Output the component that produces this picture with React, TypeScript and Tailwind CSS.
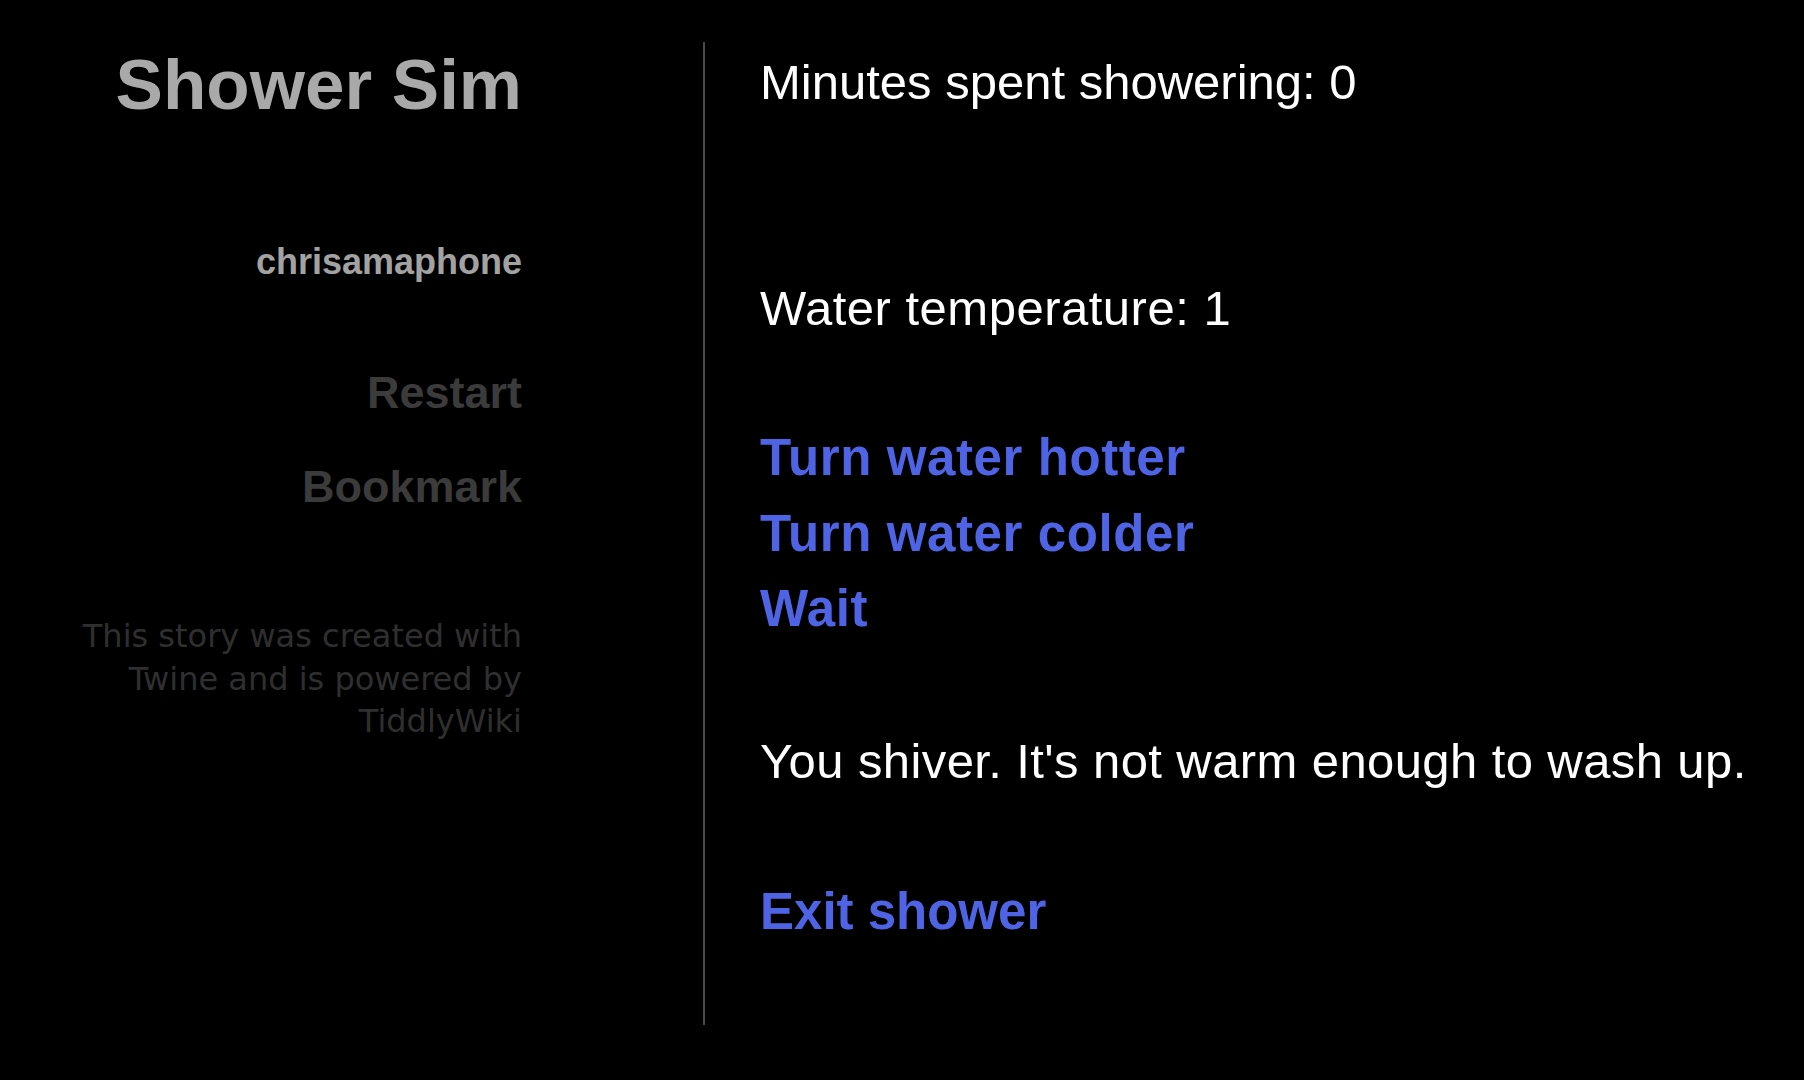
import { useState } from "react";

const sans = "font-['Liberation_Sans',Arial,sans-serif]";

export default function App() {
  const [minutes, setMinutes] = useState(0);
  const [temp, setTemp] = useState(1);

  return (
    <div className={`min-h-[1080px] w-full bg-black flex ${sans}`}>
      {/* sidebar */}
      <div className="w-[522px] flex-shrink-0 text-right flex flex-col">
        <h1 className="mt-[49px] text-[71px] leading-none font-bold text-[#a9a9a9]">Shower Sim</h1>
        <p className="mt-[124px] text-[36px] leading-none font-bold text-[#a2a2a2]">chrisamaphone</p>
        <a className="mt-[90px] text-[45px] leading-none font-bold text-[#3b3b3b] cursor-pointer">Restart</a>
        <a className="mt-[49px] text-[45px] leading-none font-bold text-[#3b3b3b] cursor-pointer">Bookmark</a>
        <p className="mt-[106px] text-[32px] leading-[42.5px] text-[#2f2f2f] font-['DejaVu_Sans',Verdana,sans-serif]">
          This story was created with
          <br />
          Twine and is powered by
          <br />
          TiddlyWiki
        </p>
      </div>

      {/* passage */}
      <div className="ml-[181px] mt-[42px] h-[983px] border-l-2 border-[#4a4a4a] pl-[55px] flex flex-col">
        <p className="mt-[16px] text-[49px] leading-none text-white">Minutes spent showering: {minutes}</p>
        <p className="mt-[177px] text-[49px] leading-none tracking-[0.5px] text-white">Water temperature: {temp}</p>
        <div className="mt-[87px] flex flex-col items-start text-[51px] leading-[75.5px] font-bold tracking-[0.6px] text-[#4e64e4]">
          <a className="cursor-pointer" onClick={() => setTemp(temp + 1)}>Turn water hotter</a>
          <a className="cursor-pointer" onClick={() => setTemp(temp - 1)}>Turn water colder</a>
          <a className="cursor-pointer" onClick={() => setMinutes(minutes + 1)}>Wait</a>
        </div>
        <p className="mt-[90px] text-[49px] leading-none tracking-[0.4px] text-white">You shiver. It's not warm enough to wash up.</p>
        <a className="mt-[100px] self-start text-[51px] leading-none font-bold text-[#4e64e4] cursor-pointer">Exit shower</a>
      </div>
    </div>
  );
}
